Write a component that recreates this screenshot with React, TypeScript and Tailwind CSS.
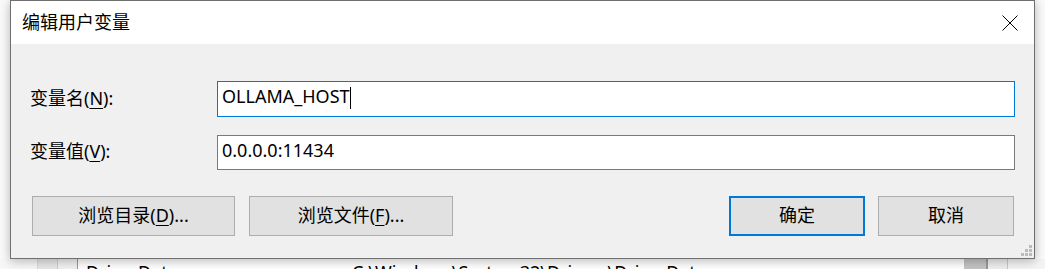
import React from "react";

const FONT = { fontFamily: '"Noto Sans", "Noto Sans CJK SC", sans-serif' };

function Underlined({ ch }: { ch: string }) {
  return <span className="underline underline-offset-[3px] decoration-1">{ch}</span>;
}

function CloseIcon() {
  return (
    <svg width="16" height="16" viewBox="0 0 16 16" className="block">
      <path d="M0.5 0.5 L15.5 15.5 M15.5 0.5 L0.5 15.5" stroke="#000" strokeWidth="1" fill="none" />
    </svg>
  );
}

function Grip() {
  const dots = [
    [8, 0],
    [4, 4],
    [8, 4],
    [0, 8],
    [4, 8],
    [8, 8],
  ];
  return (
    <svg width="11" height="11" viewBox="0 0 11 11" className="block">
      {dots.map(([x, y], i) => (
        <rect key={i} x={x} y={y} width="3" height="3" fill="#bcbcbc" />
      ))}
    </svg>
  );
}

export default function App() {
  return (
    <div className="relative w-[1045px] h-[269px] overflow-hidden bg-[#fafafa] text-black" style={FONT}>
      {/* background window (behind the dialog) */}
      <div className="flex flex-col h-full">
        <div className="flex-1" />
        <div className="flex h-[10px] bg-white text-[18px] leading-none">
          <div className="w-[38px] bg-[#f7f7f7] border-r border-[#dadada]" />
          <div className="w-[20px] bg-[#e8e8e8] border-r border-[#cfcfcf]" />
          <div className="w-[20px] bg-[#f2f2f2] border-r border-[#9a9a9a]" />
          <div className="relative flex-1 overflow-hidden">
            <div className="flex pt-[4px] pl-[8px]">
              <span className="w-[266px]">DriverData</span>
              <span>C:\Windows\System32\Drivers\DriverData</span>
            </div>
          </div>
          <div className="w-[24px] bg-[#c4c4c4] border-r-2 border-[#9a9a9a]" />
          <div className="w-[20px] bg-[#efefef] border-r border-[#c8c8c8]" />
          <div className="w-[37px] bg-[#f4f4f4]" />
        </div>
      </div>

      {/* dialog */}
      <div className="absolute left-[10px] top-0 w-[1025px] h-[259px] flex flex-col border border-[#6f6f6f] bg-[#f0f0f0] shadow-[0_2px_10px_rgba(0,0,0,0.28)]">
        <div className="h-[43px] bg-white flex items-center justify-between pl-[11px] pr-[16px]">
          <span className="text-[18px] leading-none pb-[2px]">编辑用户变量</span>
          <CloseIcon />
        </div>

        <div className="flex-1 flex flex-col px-[19px] pt-[37px] text-[18px]">
          <div className="flex items-center h-[36px]">
            <div className="w-[187px] pb-[2px]">
              变量名(<Underlined ch="N" />):
            </div>
            <div className="flex-1 h-full bg-white border border-[#0078d7] flex items-center pl-[4px] pb-[5px]">
              <span>OLLAMA_HOST</span>
              <span className="w-px h-[22px] bg-black mt-[3px]" />
            </div>
          </div>

          <div className="flex items-center h-[35px] mt-[18px]">
            <div className="w-[187px] pb-[2px]">
              变量值(<Underlined ch="V" />):
            </div>
            <div className="flex-1 h-full bg-white border border-[#7a7a7a] flex items-center pl-[4px] pb-[5px]">
              <span>0.0.0.0:11434</span>
            </div>
          </div>

          <div className="flex items-center h-[40px] mt-[26px] pl-[2px] pr-px">
            <button className="w-[203px] h-full bg-[#e1e1e1] border border-[#adadad] flex items-center justify-center pb-[2px]">
              浏览目录(<Underlined ch="D" />)...
            </button>
            <button className="ml-[14px] w-[204px] h-full bg-[#e1e1e1] border border-[#adadad] flex items-center justify-center pb-[2px]">
              浏览文件(<Underlined ch="F" />)...
            </button>
            <div className="flex-1" />
            <button className="w-[136px] h-full bg-[#e1e1e1] border-2 border-[#0078d7] flex items-center justify-center pb-[2px]">
              确定
            </button>
            <button className="ml-[13px] w-[136px] h-full bg-[#e1e1e1] border border-[#adadad] flex items-center justify-center pb-[2px]">
              取消
            </button>
          </div>
        </div>

        <div className="absolute right-[2px] bottom-[2px]">
          <Grip />
        </div>
      </div>
    </div>
  );
}
